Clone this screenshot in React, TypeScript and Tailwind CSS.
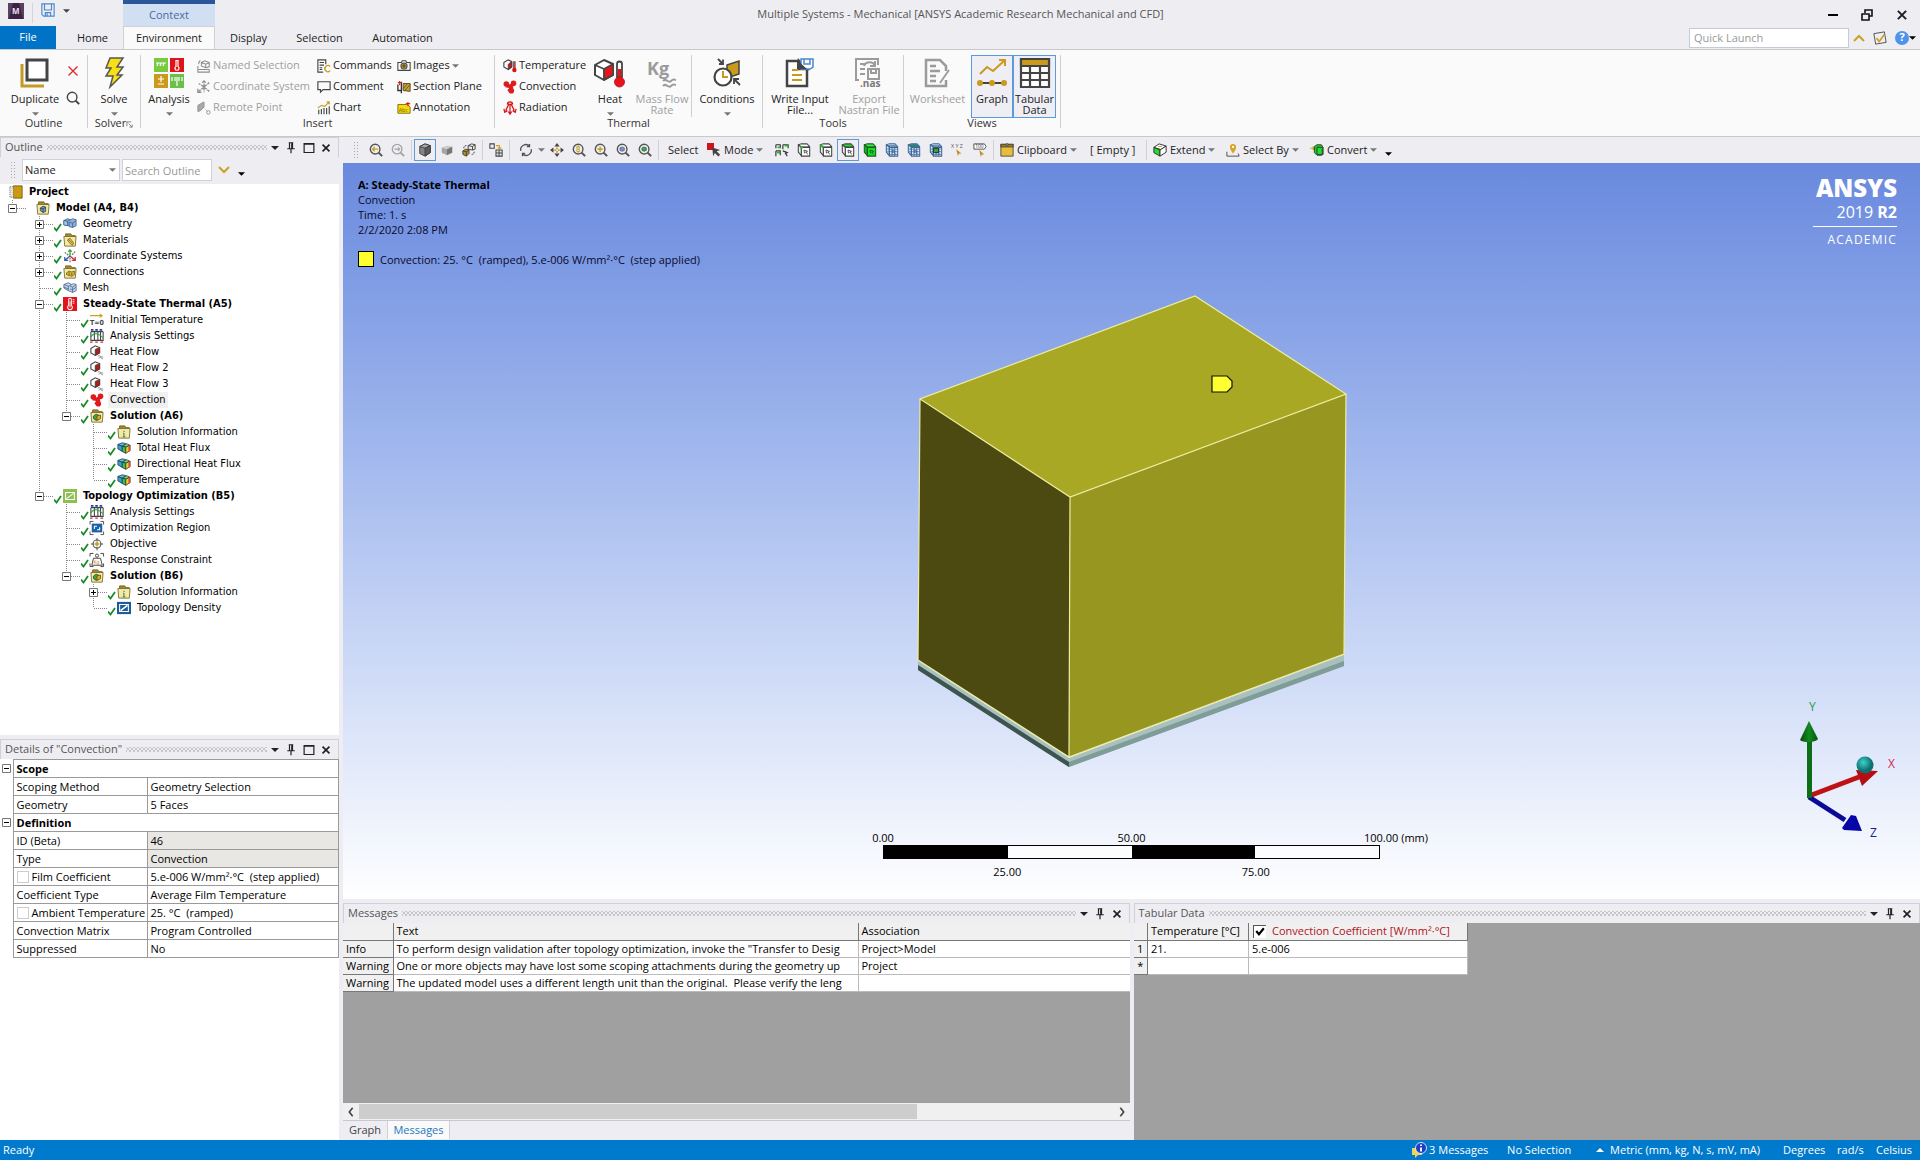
import React from 'react';

type IconProps = { name: string; size?: string };

const box = (c1: string, c2: string, c3: string, stroke = '#444') => (
  <g stroke={stroke} strokeWidth="1" strokeLinejoin="round">
    <path d="M2 4l6-3 6 2v8l-6 4-6-3z" fill={c2} />
    <path d="M2 4l6-3 6 2-6 3z" fill={c1} />
    <path d="M8 6l6-3v8l-6 4z" fill={c3} />
  </g>
);

const folder = (
  <g>
    <path d="M3 1h6l1 2h4v4H3z" fill="#a8892a" stroke="#6d5a1c" />
    <path d="M1 4h14l-1 11H2z" fill="#f3e9a6" stroke="#7a6a2a" />
  </g>
);

const lens = (
  <g fill="none" stroke="#555">
    <circle cx="7" cy="7" r="5.500" strokeWidth="1.600" />
    <path d="M11 11l4 4" strokeWidth="2.400" />
  </g>
);

const wireCube = (top: string, front: string, side: string, stroke = '#444') => (
  <g stroke={stroke} strokeWidth="1.200" strokeLinejoin="round">
    <path d="M1.500 2l3-1h7l3 3-2.500 .5h-7z" fill={top} />
    <path d="M1.500 2l3.500 3v9.500l-3.500-4z" fill={side} />
    <path d="M5 5h9.500v10H5z" fill={front} />
    <path d="M8 8l4 1.500-1.500 .5 1.500 3M8 8l.5 3.500 1.500-1" fill="none" strokeWidth="1" />
  </g>
);

const meshLines = (
  <path d="M2 7h12M2 10h12M5 3v11M8 3v12M11 3v12M3 13h11M3 3h10" stroke="#3d6a9c" strokeWidth=".9" />
);

const icons: Record<string, React.ReactNode> = {
  namedSel: (
    <g fill="none" stroke="#8c8c8c" strokeWidth="1.200">
      <path d="M5 4l4-2 5 2v5l-4 1-5-2zM5 4l5 2 4-2M10 6v4" />
      <path d="M1 8v7h13v-3M1 12h13M2 6c0-2 1-4 2-4" />
    </g>
  ),
  coordSys: (
    <g stroke="#8c8c8c" strokeWidth="1.500">
      <path d="M8 8V1M8 8l6-5M8 8l6 5M8 8l-6 5M8 8L2 4M8 8v6" strokeDasharray="4 1" />
      <path d="M6 3l2-2 2 2M1 10v4h4" fill="none" />
    </g>
  ),
  remotePoint: (
    <g>
      <path d="M1 5l7-4v6l-4 4-3 1z" fill="#a9a9a9" stroke="#8c8c8c" />
      <path d="M9 9l3 3" stroke="#8c8c8c" strokeDasharray="1 1" />
      <circle cx="13" cy="13" r="2" fill="none" stroke="#8c8c8c" />
    </g>
  ),
  commands: (
    <g fill="none" stroke="#444" strokeWidth="1.300">
      <path d="M7 15H1V1h9v5M3 4h5M3 7h5M3 10h3M3 12h3" />
      <path d="M15 8.500a3.500 3.500 0 1 0 0 5" stroke="#c9a227" strokeWidth="1.600" />
    </g>
  ),
  comment: <path d="M1 2h14v9H7l-3 3v-3H1z" fill="none" stroke="#444" strokeWidth="1.300" />,
  chart: (
    <g fill="none">
      <path d="M2 15v-5M5 15V9M8 15V8M11 15V8M14 15V6" stroke="#444" strokeWidth="1.300" />
      <path d="M1 8l4-3 4 1 5-5M11 1h3v3" stroke="#c9a227" strokeWidth="1.300" />
    </g>
  ),
  images: (
    <g fill="none" stroke="#444" strokeWidth="1.200">
      <path d="M1 4h4l1-2h4l1 2h4v9H1z" />
      <circle cx="8" cy="8" r="3.500" fill="#c9a227" />
      <circle cx="8" cy="8" r="1.300" />
    </g>
  ),
  section: (
    <g>
      <path d="M7 4h8v9l-8-1z" fill="#c9a227" stroke="#444" />
      <path d="M9 12l6-7M7 10l5-6" stroke="#6d5410" />
      <path d="M5 15V2M1 5v7h4" fill="none" stroke="#333" strokeWidth="1.500" />
      <path d="M1 3h5M3 1v5" stroke="#d22" strokeWidth="1.300" />
    </g>
  ),
  annotation: (
    <g>
      <path d="M1 4h11l3 3v7H1z" fill="#f5d90a" stroke="#7a6a10" />
      <text x="2" y="12" fontSize="6" fill="#6b5c00">Abc</text>
      <path d="M10 3h5M12.500 1v5" stroke="#d22" strokeWidth="1.300" />
    </g>
  ),
  temperature: (
    <g>
      <path d="M1 4l5-3 4 2v6l-4 3-5-3z" fill="#fff" stroke="#444" strokeWidth="1.300" />
      <path d="M6 6l4-3v6l-4 3z" fill="#c91818" stroke="#444" />
      <path d="M12 3h2v8h-2z" fill="#e33" stroke="#555" strokeWidth=".8" />
      <circle cx="13" cy="12.500" r="2.500" fill="#d81313" />
    </g>
  ),
  fan: (
    <g fill="#e01b1b">
      <circle cx="3.800" cy="4.500" r="3.200" />
      <circle cx="12" cy="3.800" r="3.200" />
      <circle cx="9.500" cy="12.200" r="3.200" />
      <path d="M2 8l5-3 4-2 1 5-1 4-5 1z" />
      <path d="M1 8l6 1-3 4z" fill="#fff" />
      <path d="M8 0l0 5 1-3zM15 8l-4-1 2 3z" fill="#fff" />
    </g>
  ),
  radiation: (
    <g fill="none" stroke="#d81313" strokeWidth="1.400">
      <path d="M8 3v11M7 3l-4 8M9 3l4 8M6 12l2 3 2-3M1 9l1 4 3-2M15 9l-1 4-3-2M5 4a3 3 0 0 1 6 0" />
    </g>
  ),
  project: (
    <g>
      <path d="M5 1h10v14H5z" fill="#c99a0e" stroke="#7a5c08" />
      <path d="M1 2h4v12H1z" fill="#ece6cf" stroke="#777" strokeDasharray="1.500 1" />
    </g>
  ),
  model: (
    <g>
      {folder}
      <path d="M5 8l3-2 3 1v5l-3 1-3-2z" fill="#7d9ab8" stroke="#2f4760" />
      <path d="M5 8l3 1 3-2M8 9v4" fill="none" stroke="#2f4760" />
    </g>
  ),
  geometry: (
    <g stroke="#3b5f8c" strokeWidth=".9" strokeLinejoin="round">
      <path d="M1 4l4-2 4 1 2-1 4 1v7l-4 2-4-1v-1l-6-1z" fill="#8fb0dc" />
      <path d="M1 4l4 1 4-2M5 5v5M7 6l4 1 4-3M11 7v5M7 6v4" fill="none" />
      <path d="M1 4l4 1v5l-4-1z" fill="#b5cdec" />
    </g>
  ),
  materials: (
    <g>
      {folder}
      <path d="M5 8l3-2 4 5-1 3-2-1z" fill="#e4c75c" stroke="#8a6c1a" />
      <path d="M6 7l5 5" stroke="#8a6c1a" />
    </g>
  ),
  csys: (
    <g fill="none" strokeWidth="1.500">
      <path d="M8 8V1M6 3l2-2 2 2" stroke="#2aa336" />
      <path d="M8 8l6 5M14 9v4h-4" stroke="#d33" />
      <path d="M8 8l-6 5M2 9v4h4" stroke="#3a62b0" />
      <path d="M2 4l4 3M14 3l-4 4M8 10v5" stroke="#777" strokeDasharray="2 1" />
    </g>
  ),
  connections: (
    <g>
      {folder}
      <path d="M4 9l3-2 3 1 3-1v4l-3 2-3-1-3-1z" fill="#d8b83e" stroke="#7d651a" />
      <path d="M7 8v4M10 9v3" stroke="#7d651a" />
    </g>
  ),
  mesh: (
    <g stroke="#44658c" strokeWidth=".9" strokeLinejoin="round">
      <path d="M1 4l5-2 4 2 2-1 3 1v7l-4 2-5-2-5-3z" fill="#c3d6ec" />
      <path d="M1 4l5 2 4-2M6 6v5M8 6l3 1 4-3M11 7v6M1 7l5 2M8 9l3 1 4-3" fill="none" />
    </g>
  ),
  thermal: (
    <g>
      <path d="M0 0h16v16H0z" fill="#e3131b" />
      <path d="M6.500 3a1.500 1.500 0 0 1 3 0v6.500a2.700 2.700 0 1 1-3 0z" fill="none" stroke="#fff" strokeWidth="1.200" />
      <path d="M8 5v7M11 3h2M11 5h2M11 7h2" stroke="#fff" />
    </g>
  ),
  initTemp: (
    <g>
      <path d="M0 3h13M11 1l3 2-3 2" fill="none" stroke="#c9a227" strokeWidth="1.300" />
      <text x="0" y="14" fontSize="8" fontWeight="600" fill="#444">T=0</text>
    </g>
  ),
  settings: (
    <g fill="none" strokeWidth="1.200">
      <path d="M1 3v10h14V3M5 2v11M9 2v11M12 2v11M1 3h14" stroke="#444" />
      <path d="M1 9c3-5 8-5 14 1" stroke="#22a23a" />
      <path d="M1 1h3M6 1h3M11 1h3" stroke="#2b3fa8" strokeWidth="2" />
      <path d="M0 15h3M6 15h3M12 15h3" stroke="#c33" strokeWidth="1.600" />
    </g>
  ),
  heatFlow: (
    <g>
      <path d="M1 4l5-3 5 2v6l-5 3-5-3z" fill="#fff" stroke="#444" strokeWidth="1.200" />
      <path d="M6 5l5-2v6l-5 3z" fill="#b5171c" stroke="#444" />
      <path d="M9 13c1-1 2-1 3 0s2 1 3 0M10 15c1-1 2-1 3 0s1 1 2 0" fill="none" stroke="#777" />
    </g>
  ),
  solution: (
    <g>
      {folder}
      <path d="M4 8l3-2 3 1v5l-3 1-3-2z" fill="#3aa34a" stroke="#2c5c33" />
      <path d="M8 8l4-1v4l-4 2z" fill="#e0b21c" stroke="#6b5a12" />
    </g>
  ),
  info: (
    <g>
      {folder}
      <path d="M8 6.500v1.500M8 9.500v4M6.500 13.500h3M6.800 9.500H8" stroke="#5f8a5a" strokeWidth="1.400" />
    </g>
  ),
  flux: (
    <g stroke="#1c3c4c" strokeWidth=".9" strokeLinejoin="round">
      <path d="M1 4l5-2 4 1-4 3z" fill="#4dc6e0" />
      <path d="M1 4l5 2v6l-5-3z" fill="#3f9fd8" />
      <path d="M6 6l5-3 4 2-5 2z" fill="#77d36a" />
      <path d="M6 6l4 1v7l-4-2z" fill="#3fbe49" />
      <path d="M10 7l5-2v6l-5 3z" fill="#f2d21b" />
      <path d="M13 6l2-1v6l-2 1.500z" fill="#e0502a" stroke="none" />
    </g>
  ),
  topo: (
    <g>
      <path d="M0 0h16v16H0z" fill="#8cc152" />
      <path d="M3 4h10v8H3z" fill="none" stroke="#fff" strokeWidth="1.200" />
      <path d="M4 11l8-6" stroke="#fff" strokeWidth="1.200" />
    </g>
  ),
  region: (
    <g>
      <path d="M2 3h12v10H2z" fill="#1c62a8" />
      <path d="M5 9V6h3M8 10h3V7" fill="none" stroke="#fff" strokeWidth="1.200" />
      <path d="M0 4V.5h4M12 .5h3.500V4M0 12v3.500h4M12 15.500h3.500V12" fill="none" stroke="#444" />
    </g>
  ),
  objective: (
    <g fill="none" stroke="#555" strokeWidth="1.200">
      <circle cx="8" cy="8" r="4.500" />
      <circle cx="8" cy="8" r="1.600" fill="#c9a227" stroke="#c9a227" />
      <path d="M8 1v4M8 11v4M1 8h4M11 8h4" />
    </g>
  ),
  constraint: (
    <g fill="none" stroke="#444" strokeWidth="1.100">
      <path d="M0 4V.5h4M12 .5h3.500V4M0 12v3.500h4M12 15.500h3.500V12" />
      <circle cx="8" cy="3" r="1.800" />
      <path d="M4 6h8l2 8H2z" />
      <text x="4" y="12.500" fontSize="6" fill="#c98a27" stroke="none">Kg</text>
    </g>
  ),
  density: (
    <g>
      <path d="M0 1h16v14H0z" fill="#1c5c99" />
      <path d="M3 4h10v8H3z" fill="none" stroke="#fff" strokeWidth="1.200" />
      <path d="M4 11l8-6" stroke="#fff" strokeWidth="2" />
    </g>
  ),
  zoomBack: <g>{lens}<path d="M10.500 7H4M6.500 4.500L4 7l2.500 2.500" fill="none" stroke="#c9a227" strokeWidth="1.600" /></g>,
  zoomForward: (
    <g fill="none" stroke="#a5a5a5">
      <circle cx="7" cy="7" r="5.500" strokeWidth="1.500" />
      <path d="M11 11l4 4" strokeWidth="2.200" />
      <path d="M4 7h6M8 5l2 2-2 2" strokeWidth="1.200" />
    </g>
  ),
  zoomInOut: <g>{lens}<path d="M5 5.500l2-2 2 2M5 8.500l2 2 2-2M5 7h4" fill="none" stroke="#c9a227" strokeWidth="1.400" /></g>,
  zoomPlus: <g>{lens}<path d="M4 7h6M7 4v6" stroke="#c9a227" strokeWidth="1.800" /></g>,
  zoomBox: <g>{lens}<path d="M4.500 5.500l2.500-1 2.500 1v3L7 9.500l-2.500-1z" fill="#7d93b8" stroke="#4a5f85" strokeWidth=".8" /></g>,
  zoomFit: <g>{lens}<path d="M4.500 5.500l2.500-1 2.500 1v3L7 9.500l-2.500-1z" fill="#3da35a" stroke="#2a6b3c" strokeWidth=".8" /></g>,
  cubeSolid: box('#a8a8a8', '#858585', '#5c5c5c', '#3c3c3c'),
  cubeFlat: (
    <g>
      <path d="M2 5l6-2 6 1-6 3z" fill="#c9c9c9" />
      <path d="M2 5l6 2v7l-6-3z" fill="#a5a5a5" />
      <path d="M8 7l6-3v7l-6 3z" fill="#777" />
    </g>
  ),
  cubeSwap: (
    <g fill="none" stroke="#444" strokeWidth="1.100">
      <path d="M7 3l4-2 4 1v5l-3 1-5-1zM7 3l5 1 3-2M12 4v4" />
      <path d="M1 9l3-2 4 1v4l-3 3-4-2z" fill="#b8901a" />
      <path d="M1 9l4 1 3-2M5 10v5" />
      <path d="M2 6c0-2 1-3 3-3M11 13c2 0 3-1 3-3" strokeDasharray="2 1" />
    </g>
  ),
  explode: (
    <g fill="none" stroke="#444" strokeWidth="1.200">
      <path d="M1 1h5v5H1zM8 8h7v7H8zM11.500 8v7M8 11.500h7" />
      <path d="M8 3h4v4M10 5l2 2 2-2" stroke="#c9a227" />
    </g>
  ),
  rotate: (
    <g fill="none" stroke="#555" strokeWidth="1.500">
      <path d="M2 9a6 6 0 0 1 10-5.500M14 7a6 6 0 0 1-10 5.500M12 1v3H9M4 15v-3h3" />
    </g>
  ),
  pan: (
    <g fill="#444">
      <path d="M8 0l3 4H5zM8 16l3-4H5zM0 8l4-3v6zM16 8l-4-3v6z" />
      <path d="M8 5v2M8 9v2M5 8h2M9 8h2" stroke="#c9a227" strokeWidth="2" />
    </g>
  ),
  modeCursor: (
    <g>
      <path d="M0 0h8v8H0z" fill="#d0121b" />
      <path d="M6 5l9 3-4 1.500 4 4-2 2-4-4L7 15z" fill="#444" />
    </g>
  ),
  filters: (
    <g>
      <path d="M1 2h5v4M9 2h6v4M1 9h5v5M1 2v4M9 2v5M1 9v6" fill="none" stroke="#333" strokeWidth="1.300" />
      <path d="M3 4h3v2H3zM11 2h4v2h-4zM2 10h4v2H2z" fill="#1fbf2f" />
      <path d="M9 9l5 2-2 1 2 3" fill="none" stroke="#333" strokeWidth="1.300" />
    </g>
  ),
  vertex: <g>{wireCube('#fff', '#fff', '#eee')}<circle cx="5" cy="5" r="1.600" fill="#1fbf2f" /></g>,
  edge: <g>{wireCube('#fff', '#fff', '#eee')}<path d="M1.500 2l3.500 3" stroke="#1fbf2f" strokeWidth="2.400" /></g>,
  face: wireCube('#1ce02c', '#fff', '#eee'),
  body: wireCube('#35f045', '#12e022', '#0cb81a', '#1d5a22'),
  nodes: <g>{wireCube('#fff', '#e7f0fa', '#dce8f4', '#3d6a9c')}{meshLines}</g>,
  elemFace: <g>{wireCube('#2ba83a', '#e7f0fa', '#dce8f4', '#3d6a9c')}{meshLines}</g>,
  elem: <g>{wireCube('#fff', '#e7f0fa', '#dce8f4', '#3d6a9c')}{meshLines}<path d="M5 6h6v5H5z" fill="#2ba83a" stroke="#222" /></g>,
  xyz: (
    <g>
      <text x="0" y="6" fontSize="6" fill="#555">X Y Z</text>
      <path d="M8 15l-2-8 6 5-3 0z" fill="#c98a1a" />
    </g>
  ),
  tag: (
    <g>
      <path d="M1 1h12l2 3-2 3H1z" fill="#fff" stroke="#444" />
      <text x="2.500" y="6" fontSize="5.500" fill="#333">100</text>
      <path d="M9 16L7 8l6 5-3 0z" fill="#c98a1a" />
    </g>
  ),
  clipboard: (
    <g>
      <path d="M1 1.500h14v13.500H1z" fill="#e8bc3c" stroke="#444" />
      <path d="M1 1.500h14v3H1z" fill="#a87c14" stroke="#444" />
      <path d="M7 1h2v2H7z" fill="#fff" stroke="#444" />
    </g>
  ),
  extend: (
    <g stroke="#333" strokeWidth="1.100" strokeLinejoin="round">
      <path d="M1 5l6-4 8 2.500-6 4z" fill="#fff" />
      <path d="M1 5l7 3v7l-7-4z" fill="#1ce02c" />
      <path d="M8 8l7-4.500v7L8 15z" fill="#fff" />
      <path d="M6 4h4" stroke="#c9a227" />
    </g>
  ),
  selectBy: (
    <g>
      <path d="M8 12C5 8 4.500 6 4.500 4.500a3.500 3.500 0 0 1 7 0C11.500 6 11 8 8 12z" fill="#d9a520" />
      <circle cx="8" cy="4.500" r="1.300" fill="#fff" />
      <path d="M1 10v5M1 15h14M15 15l-1-3" fill="none" stroke="#444" />
    </g>
  ),
  convert: (
    <g>
      <path d="M0 6h5M3 4l2 2-2 2" fill="none" stroke="#c9a227" strokeWidth="1.300" />
      <path d="M5 4l3-2h5l2 3v8l-2 1H8l-3-3z" fill="#18c928" stroke="#333" />
      <path d="M8 5h6v8H8z" fill="#1ce02c" stroke="#333" />
    </g>
  ),
  pin: <path d="M5 1h6M6 1v8M10 1v8M9 1v8M3 9h10M8 9v6" fill="none" stroke="#222" strokeWidth="1.600" />,
  square: <path d="M1.500 2h13v12h-13zM1 3h14" fill="none" stroke="#222" strokeWidth="1.600" />,
  close: <path d="M2.500 2.500l11 11M13.500 2.500l-11 11" stroke="#1e1e1e" strokeWidth="2.600" />,
  redX: <path d="M2 2l12 12M14 2L2 14" stroke="#dd2c2c" strokeWidth="1.800" />,
  search: (
    <g fill="none" stroke="#444">
      <circle cx="7" cy="7" r="5.500" strokeWidth="1.600" />
      <path d="M11 11l4 4" strokeWidth="2.400" />
    </g>
  ),
  launcher: <path d="M2 12V2h10M6 6l8 8M14 8v6H8" fill="none" stroke="#777" strokeWidth="2" />,
  save: (
    <g fill="none" stroke="#4a86cf" strokeWidth="1.300">
      <path d="M1 1h14v14H3l-2-2zM4 1v7h8V1M5 15v-4h6v4M7 12v3" />
    </g>
  ),
  app: (
    <g>
      <path d="M0 0h16v16H0z" fill="#5b3f63" />
      <path d="M5 0h6l4 16H1z" fill="#3a2340" />
      <text x="4" y="11" fontSize="8" fontWeight="700" fill="#e9dfee">M</text>
    </g>
  ),
};

const large: Record<string, React.ReactNode> = {
  duplicate: (
    <g fill="none">
      <path d="M3 7v22h22" stroke="#c29a28" strokeWidth="3" />
      <path d="M8 3h20v20H8z" fill="#fff" stroke="#444" strokeWidth="3" />
    </g>
  ),
  solve: <path d="M12 1h13l-6 9h6l-6 8h5L12 30l3-11H8l5-8H8z" fill="#f7e017" stroke="#555" strokeWidth="1.500" />,
  analysis: (
    <g>
      <path d="M1 1h14v14H1z" fill="#7ac943" />
      <path d="M17 1h14v14H17z" fill="#e0131b" />
      <path d="M1 17h14v14H1z" fill="#c99a1c" />
      <path d="M17 17h14v14H17z" fill="#6cc04a" />
      <path d="M3 6h10M4 9l1-3M7 9l1-3M10 9l1-3M5 22h6M8 19v6M5 27h6M19 20v4M22 20v4M24 20v9M26 20v4M29 20v4" stroke="#fff" strokeWidth="1.200" />
      <path d="M23 3.500h2v6a2 2 0 1 1-2 0z" fill="none" stroke="#fff" strokeWidth="1.200" />
    </g>
  ),
  heat: (
    <g strokeLinejoin="round">
      <path d="M1 8l9-5 9 4v11l-9 5-9-5z" fill="#fff" stroke="#444" strokeWidth="2" />
      <path d="M10 12l9-5v11l-9 5z" fill="#e8141c" stroke="#444" strokeWidth="1.500" />
      <path d="M1 8l9 4v11" fill="none" stroke="#444" strokeWidth="1.500" />
      <path d="M23 7a2.500 2.500 0 0 1 5 0v13h-5z" fill="#fff" stroke="#444" strokeWidth="1.800" />
      <path d="M25.500 12v10" stroke="#e8141c" strokeWidth="3" />
      <circle cx="25.500" cy="25" r="5" fill="#e8141c" stroke="#a11" strokeWidth=".8" />
    </g>
  ),
  massFlow: (
    <g>
      <text x="1" y="18" fontSize="18" fontWeight="700" fill="#9b9b9b">Kg</text>
      <path d="M17 24c3-4 5 3 8 0s3-1 5-1M17 29c3-4 5 3 8 0s3-1 5-1" fill="none" stroke="#9b9b9b" strokeWidth="2" />
    </g>
  ),
  conditions: (
    <g fill="none">
      <path d="M16 8l12-4v13l-12 4z" fill="#c99a1c" stroke="#444" strokeWidth="1.500" />
      <circle cx="12" cy="20" r="8.500" fill="#fff" stroke="#444" strokeWidth="2.200" />
      <path d="M12 14v6h5" stroke="#c99a1c" strokeWidth="2" />
      <path d="M7 2l5 5M12 2.500V7H8M29 28l-6-6M23 27v-5h5" stroke="#444" strokeWidth="1.800" />
    </g>
  ),
  writeInput: (
    <g fill="none">
      <path d="M15 4H3v25h20V12M15 4l8 8h-8z" fill="#fff" stroke="#444" strokeWidth="2.500" />
      <path d="M8 13h6M8 18h10M8 23h10" stroke="#c99a1c" strokeWidth="2.200" />
      <path d="M17 2h12v8l-3 2h-9zM20 2v5h6V2" fill="#fff" stroke="#4a86cf" strokeWidth="1.500" />
      <path d="M13 3l10 9H13z" fill="#444" />
    </g>
  ),
  exportNas: (
    <g fill="none" stroke="#9b9b9b" strokeWidth="2">
      <path d="M6 23H3V2h22v6M7 7h6M7 12h5M7 17h5M11 9c2-5 9-5 11 0M22 4v5h-5M15 12h11v10H15zM18 12v4h5v-4" />
      <text x="7" y="30" fontSize="10" fontWeight="700" fill="#777" stroke="none">.nas</text>
    </g>
  ),
  worksheet: (
    <g fill="none" stroke="#9b9b9b" strokeWidth="2.500">
      <path d="M24 23v6H4V3h14l6 6v5M8 9h6M8 14h10M8 19h6M8 24h6" />
      <path d="M27 13l-9 13" strokeWidth="1.800" />
    </g>
  ),
  graph: (
    <g fill="none">
      <path d="M4 17l7-7 6 4L29 3M23 3h6v6" stroke="#c99a1c" strokeWidth="2" />
      <path d="M3 26h26" stroke="#444" strokeWidth="2" />
      <g fill="#c99a1c"><circle cx="4" cy="26" r="3" /><circle cx="16" cy="26" r="3" /><circle cx="28" cy="26" r="3" /></g>
    </g>
  ),
  tabular: (
    <g fill="none" stroke="#444" strokeWidth="2.200">
      <path d="M2 2h28v28H2z" fill="#fff" />
      <path d="M2 2h28v7H2z" fill="#c99a1c" />
      <path d="M2 16h28M2 23h28M11 9v21M21 9v21" />
    </g>
  ),
};

const Icon = ({ name, size = 'size-[14px]' }: IconProps) => (
  <svg viewBox="0 0 16 16" className={`${size} shrink-0 overflow-visible`} aria-hidden="true">{icons[name]}</svg>
);

const Caret = ({ color = 'text-[#777]' }: { color?: string }) => (
  <svg viewBox="0 0 8 4" className={`h-1 w-[7px] shrink-0 ${color}`} aria-hidden="true">
    <path d="M0 0h8L4 4z" fill="currentColor" />
  </svg>
);

type BigProps = { icon: string; lines: string[]; width: string; muted?: boolean; active?: boolean; caret?: boolean };

const BigButton = ({ icon, lines, width, muted, active, caret }: BigProps) => (
  <button
    className={`flex h-[63px] flex-col items-center border ${width} ${muted ? 'text-[#a0a0a0]' : 'text-[#222]'} ${active ? 'border-[#5b9bdc] bg-[#eeeef4]' : 'border-transparent'}`}
  >
    <svg viewBox="0 0 32 32" className="mt-px size-8 overflow-visible" aria-hidden="true">{large[icon]}</svg>
    <span className="mt-1 flex flex-col whitespace-nowrap leading-[11px]">
      {lines.map((l) => <span key={l}>{l}</span>)}
    </span>
    {caret && <span className="mt-2"><Caret /></span>}
  </button>
);

type SmallProps = { icon: string; label: string; muted?: boolean; caret?: boolean };

const SmallButton = ({ icon, label, muted, caret }: SmallProps) => (
  <button className={`flex h-[21px] items-center gap-0.5 whitespace-nowrap ${muted ? 'text-[#a0a0a0]' : 'text-[#222]'}`}>
    <Icon name={icon} />
    {label}
    {caret && <Caret />}
  </button>
);

type GroupProps = { label: string; width: string; launcher?: boolean; children: React.ReactNode };

const Group = ({ label, width, launcher, children }: GroupProps) => (
  <section className={`flex h-[73px] shrink-0 flex-col border-r border-[#cfcfd4] ${width}`}>
    <div className="flex h-[62px]">{children}</div>
    <div className="flex items-end justify-center leading-[11px] text-[#333]">
      {label}
      {launcher && <button aria-label="More" className="flex"><Icon name="launcher" size="size-[7px]" /></button>}
    </div>
  </section>
);

const Header = () => (
  <header className="shrink-0 bg-[#eeeef2]">
    <div className="flex h-[26px]">
      <div className="flex w-[123px] items-start gap-2 pl-2 pt-[3px]">
        <Icon name="app" size="size-4" />
        <span className="h-5 w-px bg-[#d4d4da]" />
        <Icon name="save" />
        <span className="pt-1.5"><Caret color="text-[#444]" /></span>
      </div>
      <div className="flex w-[92px] items-center justify-center border-t-4 border-[#2b579a] bg-[#d0dff2] text-[#4a6ba5]">Context</div>
      <h1 className="flex-1 pr-[122px] pt-1.5 text-center leading-4 text-[#555]">
        Multiple Systems - Mechanical [ANSYS Academic Research Mechanical and CFD]
      </h1>
      <div className="flex items-center gap-[23px] pr-3 pt-1">
        <button aria-label="Minimize" className="flex h-3 w-2.5 items-center"><span className="h-0.5 w-full bg-black" /></button>
        <button aria-label="Restore" className="flex">
          <svg viewBox="0 0 12 12" className="size-3"><path d="M1 5h7v6H1zM4 4V1h7v6H8" fill="none" stroke="#111" strokeWidth="1.600" /></svg>
        </button>
        <button aria-label="Close" className="flex"><Icon name="close" size="size-3" /></button>
      </div>
    </div>
    <div className="flex h-[23px] items-center">
      <nav className="flex h-full flex-1 items-center text-[#222]">
        <button className="h-full w-14 bg-[#0173c7] text-white">File</button>
        <button className="h-full w-[67px] pl-1.5 pt-0.5">Home</button>
        <button className="h-full w-[92px] border-x border-t border-[#d0d0d6] bg-[#fafafa]">Environment</button>
        <button className="h-full w-[67px] pt-0.5">Display</button>
        <button className="h-full w-[75px] pt-0.5">Selection</button>
        <button className="h-full w-[91px] pt-0.5">Automation</button>
      </nav>
      <input aria-label="Quick Launch" placeholder="Quick Launch" className="h-5 w-40 border border-[#c5cad6] bg-white px-1 placeholder:text-[#999]" />
      <div className="flex items-center gap-2 pl-1 pr-1">
        <svg viewBox="0 0 12 8" className="h-2 w-3"><path d="M1 7l5-5 5 5" fill="none" stroke="#c9a227" strokeWidth="2" /></svg>
        <svg viewBox="0 0 16 16" className="size-3.5"><path d="M1 3l12-2 2 12-12 2z" fill="none" stroke="#444" /><path d="M4 8l3 4 6-8" fill="none" stroke="#c9a227" strokeWidth="2" /></svg>
        <span className="flex items-center">
          <span className="flex size-3.5 items-center justify-center rounded-full bg-[#4f94e8] font-bold text-white">?</span>
          <Caret color="text-black" />
        </span>
      </div>
    </div>
  </header>
);

const Ribbon = () => (
  <div className="flex h-[88px] shrink-0 overflow-hidden border-y border-[#c8c8cc] bg-[#fafafa] pt-[5px]">
    <Group label="Outline" width="w-[88px]">
      <BigButton icon="duplicate" lines={['Duplicate']} width="w-[62px] ml-1" caret />
      <div className="flex flex-col items-center gap-[14px] pt-2.5">
        <button aria-label="Delete" className="flex"><Icon name="redX" size="size-3" /></button>
        <button aria-label="Find" className="flex"><Icon name="search" /></button>
      </div>
    </Group>
    <Group label="Solver" width="w-[53px]" launcher>
      <BigButton icon="solve" lines={['Solve']} width="w-[53px]" caret />
    </Group>
    <Group label="Insert" width="w-[354px]">
      <BigButton icon="analysis" lines={['Analysis']} width="w-14" caret />
      <div className="w-[120px]">
        <SmallButton icon="namedSel" label="Named Selection" muted />
        <SmallButton icon="coordSys" label="Coordinate System" muted />
        <SmallButton icon="remotePoint" label="Remote Point" muted />
      </div>
      <div className="w-20">
        <SmallButton icon="commands" label="Commands" />
        <SmallButton icon="comment" label="Comment" />
        <SmallButton icon="chart" label="Chart" />
      </div>
      <div>
        <SmallButton icon="images" label="Images" caret />
        <SmallButton icon="section" label="Section Plane" />
        <SmallButton icon="annotation" label="Annotation" />
      </div>
    </Group>
    <Group label="Thermal" width="w-[268px]">
      <div className="ml-2 w-[84px]">
        <SmallButton icon="temperature" label="Temperature" />
        <SmallButton icon="fan" label="Convection" />
        <SmallButton icon="radiation" label="Radiation" />
      </div>
      <BigButton icon="heat" lines={['Heat']} width="w-[46px]" caret />
      <BigButton icon="massFlow" lines={['Mass Flow', 'Rate']} width="w-[58px]" muted />
      <div className="border-l border-[#cfcfd4]">
        <BigButton icon="conditions" lines={['Conditions']} width="w-[70px]" caret />
      </div>
    </Group>
    <Group label="Tools" width="w-[141px]">
      <BigButton icon="writeInput" lines={['Write Input', 'File...']} width="w-[74px]" />
      <BigButton icon="exportNas" lines={['Export', 'Nastran File']} width="w-16" muted />
    </Group>
    <Group label="Views" width="w-[157px]">
      <BigButton icon="worksheet" lines={['Worksheet']} width="w-[67px]" muted />
      <BigButton icon="graph" lines={['Graph']} width="w-[42px]" active />
      <BigButton icon="tabular" lines={['Tabular', 'Data']} width="w-[43px]" active />
    </Group>
  </div>
);

const PanelHeader = ({ title, floating }: { title: string; floating?: boolean }) => (
  <div className="flex h-5 shrink-0 items-center gap-2 border border-b-0 border-[#d0d0da] bg-[#eeeef2] pl-1 pr-[7px] text-[#555]">
    <h2 className="whitespace-nowrap">{title}</h2>
    <span className="-mx-1 h-[5px] flex-1 bg-[radial-gradient(#aaa_0.5px,transparent_1px),radial-gradient(#aaa_0.5px,transparent_1px)] bg-[length:4px_4px] bg-[position:0_0,2px_2px]" />
    <span className="flex items-center gap-[6px]">
      <svg viewBox="0 0 8 4" className="h-1 w-2"><path d="M0 0h8L4 4z" fill="#222" /></svg>
      <button aria-label="Pin" className="flex"><Icon name="pin" size="size-3" /></button>
      {floating && <button aria-label="Maximize" className="flex"><Icon name="square" size="size-3" /></button>}
      <button aria-label="Close" className="flex"><Icon name="close" size="size-2.5" /></button>
    </span>
  </div>
);

type Node = { label: string; icon: string; level: number; exp?: '+' | '-'; bold?: boolean; selected?: boolean; guides?: number[]; end?: boolean };

// guides: levels whose vertical line runs past this row
const tree: Node[] = [
  { label: 'Project', icon: 'project', level: 0, bold: true },
  { label: 'Model (A4, B4)', icon: 'model', level: 1, exp: '-', bold: true, end: true },
  { label: 'Geometry', icon: 'geometry', level: 2, exp: '+' },
  { label: 'Materials', icon: 'materials', level: 2, exp: '+' },
  { label: 'Coordinate Systems', icon: 'csys', level: 2, exp: '+' },
  { label: 'Connections', icon: 'connections', level: 2, exp: '+' },
  { label: 'Mesh', icon: 'mesh', level: 2 },
  { label: 'Steady-State Thermal (A5)', icon: 'thermal', level: 2, exp: '-', bold: true },
  { label: 'Initial Temperature', icon: 'initTemp', level: 3, guides: [2] },
  { label: 'Analysis Settings', icon: 'settings', level: 3, guides: [2] },
  { label: 'Heat Flow', icon: 'heatFlow', level: 3, guides: [2] },
  { label: 'Heat Flow 2', icon: 'heatFlow', level: 3, guides: [2] },
  { label: 'Heat Flow 3', icon: 'heatFlow', level: 3, guides: [2] },
  { label: 'Convection', icon: 'fan', level: 3, guides: [2], selected: true },
  { label: 'Solution (A6)', icon: 'solution', level: 3, exp: '-', bold: true, guides: [2], end: true },
  { label: 'Solution Information', icon: 'info', level: 4, guides: [2] },
  { label: 'Total Heat Flux', icon: 'flux', level: 4, guides: [2] },
  { label: 'Directional Heat Flux', icon: 'flux', level: 4, guides: [2] },
  { label: 'Temperature', icon: 'flux', level: 4, guides: [2], end: true },
  { label: 'Topology Optimization (B5)', icon: 'topo', level: 2, exp: '-', bold: true, end: true },
  { label: 'Analysis Settings', icon: 'settings', level: 3 },
  { label: 'Optimization Region', icon: 'region', level: 3 },
  { label: 'Objective', icon: 'objective', level: 3 },
  { label: 'Response Constraint', icon: 'constraint', level: 3 },
  { label: 'Solution (B6)', icon: 'solution', level: 3, exp: '-', bold: true, end: true },
  { label: 'Solution Information', icon: 'info', level: 4, exp: '+' },
  { label: 'Topology Density', icon: 'density', level: 4, end: true },
];

const Expander = ({ open }: { open: boolean }) => (
  <g>
    <path d="M8.500 4.500h8v8h-8z" fill="#fff" stroke="#777" />
    <path d={open ? 'M10 8.500h5' : 'M10 8.500h5M12.500 6v5'} stroke="#000" />
  </g>
);

const TreeRow = ({ node }: { node: Node }) => (
  <li className="flex h-4 items-center">
    {Array.from({ length: node.level }, (_, i) => i + 1).map((lv) => (
      <svg key={lv} viewBox="0 0 27 16" className="h-4 w-[27px] shrink-0" aria-hidden="true">
        {lv < node.level && node.guides?.includes(lv) && <path d="M12.500 0v16" stroke="#888" strokeDasharray="1 1" />}
        {lv === node.level && (
          <g>
            <path d={node.end ? 'M12.500 0v8' : 'M12.500 0v16'} stroke="#888" strokeDasharray="1 1" />
            <path d="M13 8.500h14" stroke="#888" strokeDasharray="1 1" />
            {node.exp && <Expander open={node.exp === '-'} />}
          </g>
        )}
      </svg>
    ))}
    <svg viewBox="0 0 9 16" className="h-4 w-[9px] shrink-0" aria-hidden="true">
      {node.level > 1 && <path d="M0 11.500l2.500 3L7 8" fill="none" stroke="#1c8a2a" strokeWidth="1.800" />}
    </svg>
    <Icon name={node.icon} />
    <span className={`ml-1 whitespace-nowrap px-0.5 leading-4 ${node.bold ? 'font-bold' : ''} ${node.selected ? 'bg-[#f0f0f0]' : ''}`}>{node.label}</span>
  </li>
);

const Grip = () => (
  <span className="h-[18px] w-1.5 bg-[radial-gradient(#aaa_0.5px,transparent_1px)] bg-[length:3px_3px]" />
);

const OutlinePanel = () => (
  <section className="flex min-h-0 flex-1 flex-col bg-white">
    <PanelHeader title="Outline" floating />
    <div className="flex h-[27px] shrink-0 items-center bg-[#eeeef2] pb-px pl-2.5">
      <Grip />
      <span className="relative ml-1.5 flex">
        <select aria-label="Filter by" className="h-[22px] w-[98px] appearance-none border border-[#d0d0da] bg-white pl-0.5 text-[#222]">
          <option>Name</option>
        </select>
        <span className="pointer-events-none absolute right-1 top-[9px] flex"><Caret /></span>
      </span>
      <input aria-label="Search Outline" placeholder="Search Outline" className="ml-0.5 h-[22px] w-[90px] border border-[#d0d0da] bg-white px-0.5 placeholder:text-[#999]" />
      <svg viewBox="0 0 12 8" className="ml-1.5 h-2 w-3"><path d="M1 1l5 5 5-5" fill="none" stroke="#c9a227" strokeWidth="2" /></svg>
      <span className="ml-2 mt-2"><Caret color="text-black" /></span>
    </div>
    <ul className="min-h-0 flex-1 overflow-hidden font-['DejaVu_Sans_Condensed','DejaVu_Sans',sans-serif] text-[11px] text-black">
      {tree.map((node, i) => <TreeRow key={i} node={node} />)}
    </ul>
  </section>
);

type Detail = { name: string; value?: string; ro?: boolean; check?: boolean };

const details: Detail[] = [
  { name: 'Scope' },
  { name: 'Scoping Method', value: 'Geometry Selection' },
  { name: 'Geometry', value: '5 Faces' },
  { name: 'Definition' },
  { name: 'ID (Beta)', value: '46', ro: true },
  { name: 'Type', value: 'Convection', ro: true },
  { name: 'Film Coefficient', value: '5.e-006 W/mm²·°C  (step applied)', check: true },
  { name: 'Coefficient Type', value: 'Average Film Temperature' },
  { name: 'Ambient Temperature', value: '25. °C  (ramped)', check: true },
  { name: 'Convection Matrix', value: 'Program Controlled' },
  { name: 'Suppressed', value: 'No' },
];

const DetailsPanel = () => (
  <section className="flex h-[401px] shrink-0 flex-col bg-white">
    <PanelHeader title={'Details of "Convection"'} floating />
    <table className="w-full table-fixed border-collapse text-black">
      <colgroup>
        <col className="w-[13px]" />
        <col className="w-[134px]" />
        <col />
      </colgroup>
      <tbody>
        {details.map((d) => (
          <tr key={d.name} className="h-[18px] leading-4">
            <td className="p-0 pl-0.5">
              {!d.value && (
                <svg viewBox="8 4 9 9" className="size-[9px]" aria-hidden="true"><Expander open /></svg>
              )}
            </td>
            {d.value ? (
              <>
                <td className="border border-[#9a9a9a] p-0 pl-[3px]">
                  {d.check ? (
                    <label className="flex items-center gap-[3px] whitespace-nowrap">
                      <input type="checkbox" className="size-3 appearance-none border border-[#ccc] bg-white" />
                      {d.name}
                    </label>
                  ) : d.name}
                </td>
                <td className={`whitespace-pre border border-[#9a9a9a] p-0 pl-[3px] ${d.ro ? 'bg-[#e8e7e3]' : ''}`}>{d.value}</td>
              </>
            ) : (
              <td colSpan={2} className="border border-[#9a9a9a] p-0 pl-[3px] font-bold">{d.name}</td>
            )}
          </tr>
        ))}
      </tbody>
    </table>
  </section>
);

const Tool = ({ name, active }: { name: string; active?: boolean }) => (
  <button aria-label={name} className={`flex size-[22px] items-center justify-center border ${active ? 'border-[#5b9bdc]' : 'border-transparent'}`}>
    <Icon name={name} />
  </button>
);

const ToolText = ({ name, label, width }: { name: string; label: string; width: string }) => (
  <button className={`flex items-center gap-[3px] whitespace-nowrap ${width}`}>
    <Icon name={name} />
    {label}
    <Caret />
  </button>
);

const Sep = () => <span className="mx-0.5 h-5 w-px bg-[#d0d0d8]" />;

const Toolbar = () => (
  <div className="flex h-[26px] shrink-0 items-center overflow-hidden bg-[#eeeef2] pl-2.5 text-[#222]">
    <Grip />
    <span className="ml-1.5 flex items-center">
      <Tool name="zoomBack" />
      <Tool name="zoomForward" />
      <Sep />
      <Tool name="cubeSolid" active />
      <Tool name="cubeFlat" />
      <Tool name="cubeSwap" />
      <Sep />
      <Tool name="explode" />
      <Sep />
      <span className="ml-[3px] flex"><Tool name="rotate" /></span>
      <span className="px-px"><Caret /></span>
      <Tool name="pan" />
      <Tool name="zoomInOut" />
      <Tool name="zoomPlus" />
      <Tool name="zoomBox" />
      <Tool name="zoomFit" />
      <Sep />
    </span>
    <span className="ml-[7px] w-[39px]">Select</span>
    <ToolText name="modeCursor" label="Mode" width="w-16" />
    <Tool name="filters" />
    <Tool name="vertex" />
    <Tool name="edge" />
    <Tool name="face" active />
    <Tool name="body" />
    <Tool name="nodes" />
    <Tool name="elemFace" />
    <Tool name="elem" />
    <Tool name="xyz" />
    <Tool name="tag" />
    <Sep />
    <ToolText name="clipboard" label="Clipboard" width="ml-1 w-[90px]" />
    <span className="w-[50px] whitespace-nowrap">[ Empty ]</span>
    <span className="ml-1 flex"><Sep /></span>
    <ToolText name="extend" label="Extend" width="ml-1 w-[73px]" />
    <ToolText name="selectBy" label="Select By" width="w-[84px]" />
    <ToolText name="convert" label="Convert" width="w-[75px]" />
    <span className="mt-2"><Caret color="text-black" /></span>
  </div>
);

const Cube = () => (
  <svg viewBox="910 286 444 492" className="mt-[123px] h-[492px] w-[444px]" aria-hidden="true">
    <path d="M918 661l151 97 275-103v11l-275 101-151-97z" fill="#a9c0bd" />
    <path d="M918 665l151 97 275-101v5l-275 101-151-97z" fill="#7f9c98" />
    <path d="M918 665l151 97v5l-151-97z" fill="#3e5450" />
    <path d="M1195 296l151 98-276 103-150-98z" fill="#a9a824" />
    <path d="M920 399l150 98-1 260-151-97z" fill="#4c4a10" />
    <path d="M1070 497l276-103-2 260-275 103z" fill="#979621" />
    <path d="M1195 296l151 98-276 103-150-98zM920 399l-2 261 151 97 275-103 2-260M1070 497l-1 260" fill="none" stroke="#efeea0" strokeWidth="1.200" />
    <path d="M1212 376h15l5 5v6l-5 5h-15z" fill="#ffff30" stroke="#111" strokeWidth="1.200" />
  </svg>
);

const Triad = () => (
  <svg viewBox="1790 695 120 150" className="absolute bottom-[55px] right-2.5 h-[150px] w-[120px]" aria-hidden="true">
    <defs>
      <linearGradient id="green"><stop offset="0" stopColor="#0a4a0e" /><stop offset=".5" stopColor="#128a1c" /><stop offset="1" stopColor="#0a5210" /></linearGradient>
      <radialGradient id="ball" cx=".4" cy=".35"><stop offset="0" stopColor="#3fd0cc" /><stop offset="1" stopColor="#0c6f70" /></radialGradient>
    </defs>
    <path d="M1809 797l50-19" stroke="#c01216" strokeWidth="5" />
    <path d="M1856 771l22 1-16 15z" fill="#b50e12" />
    <path d="M1809 798l36 23" stroke="#0a0a96" strokeWidth="5" />
    <path d="M1842 829l9-13 5 1 6 15-18-1z" fill="#0707a8" />
    <path d="M1807 740h5v59h-5z" fill="#0c6e15" />
    <path d="M1809 722l9 18c-3 4-15 4-18 1z" fill="url(#green)" />
    <circle cx="1865" cy="766" r="8.500" fill="url(#ball)" />
    <g fontSize="12">
      <text x="1809" y="712" fill="#2a9a4a">Y</text>
      <text x="1888" y="769" fill="#cc2a4a">X</text>
      <text x="1870" y="838" fill="#1a1a9a">Z</text>
    </g>
  </svg>
);

const ScaleBar = () => (
  <div className="w-[497px] text-[11px] leading-[14px] text-black">
    <div className="flex justify-between">
      <span className="flex w-0 justify-center">0.00</span>
      <span className="flex w-0 justify-center">50.00</span>
      <span className="w-0"><span className="-ml-4 whitespace-nowrap">100.00 (mm)</span></span>
    </div>
    <div className="flex h-[14px] border border-black bg-white/60">
      <span className="flex-1 bg-black" />
      <span className="flex-1" />
      <span className="flex-1 bg-black" />
      <span className="flex-1" />
    </div>
    <div className="mt-1.5 flex justify-around">
      <span className="flex w-0 justify-center">25.00</span>
      <span className="flex w-0 justify-center">75.00</span>
    </div>
  </div>
);

const Viewport = () => (
  <main className="relative flex min-h-0 flex-1 flex-col items-center overflow-hidden bg-linear-to-b from-[#6989de] to-white">
    <div className="absolute left-[15px] top-[14px] leading-[15px] text-[#0a0a2a]">
      <p className="font-bold text-black">A: Steady-State Thermal</p>
      <p>Convection</p>
      <p>Time: 1. s</p>
      <p>2/2/2020 2:08 PM</p>
      <p className="mt-[14px] flex items-center gap-1.5 whitespace-pre">
        <span className="size-4 border border-black bg-[#ffff30]" />
        Convection: 25. °C  (ramped), 5.e-006 W/mm²·°C  (step applied)
      </p>
    </div>
    <div className="absolute right-[23px] top-[11px] flex flex-col items-end text-white">
      <span className="text-2xl font-extrabold leading-7">ANSYS</span>
      <span className="text-base leading-5">2019 <b>R2</b></span>
      <span className="mt-1 w-[84px] border-t border-white pt-[7px] text-right text-[12px] leading-3 tracking-widest">ACADEMIC</span>
    </div>
    <Cube />
    <div className="mt-[53px]"><ScaleBar /></div>
    <Triad />
  </main>
);

const messages = [
  ['Info', 'To perform design validation after topology optimization, invoke the "Transfer to Desig', 'Project>Model'],
  ['Warning', 'One or more objects may have lost some scoping attachments during the geometry up', 'Project'],
  ['Warning', 'The updated model uses a different length unit than the original.  Please verify the leng', ''],
];

const MessagesPanel = () => (
  <section className="flex min-w-0 flex-1 flex-col">
    <PanelHeader title="Messages" />
    <div className="flex-1 bg-[#a0a0a0]">
      <table className="w-full table-fixed border-collapse text-black">
        <colgroup>
          <col className="w-[50px]" />
          <col className="w-[465px]" />
          <col />
        </colgroup>
        <thead>
          <tr className="h-[17px] bg-[#f0f0f0] text-left leading-4">
            <th className="border-b border-r border-[#777] p-0" />
            <th className="border-b border-r border-[#777] p-0 pl-[3px] font-normal">Text</th>
            <th className="border-b border-[#777] p-0 pl-[3px] font-normal">Association</th>
          </tr>
        </thead>
        <tbody>
          {messages.map(([kind, text, assoc]) => (
            <tr key={text} className="h-[17px] bg-white leading-4">
              <td className="overflow-hidden whitespace-nowrap border-b border-r border-[#777] bg-[#f0f0f0] p-0 pl-[3px]">{kind}</td>
              <td className="overflow-hidden whitespace-pre border-b border-r border-[#bbb] p-0 pl-[3px]">{text}</td>
              <td className="border-b border-[#bbb] p-0 pl-[3px]">{assoc}</td>
            </tr>
          ))}
        </tbody>
      </table>
    </div>
    <div className="flex h-[17px] shrink-0 items-center gap-1 bg-[#f0f0f0] px-1">
      <svg viewBox="0 0 8 12" className="h-2.5 w-2"><path d="M6 1L2 6l4 5" fill="none" stroke="#444" strokeWidth="2" /></svg>
      <span className="flex h-[15px] flex-1"><span className="h-full w-[74%] bg-[#cdcdcd]" /></span>
      <svg viewBox="0 0 8 12" className="h-2.5 w-2"><path d="M2 1l4 5-4 5" fill="none" stroke="#444" strokeWidth="2" /></svg>
    </div>
    <div className="flex h-5 shrink-0 items-start border-t border-[#c8c8d4] bg-[#eeeef2]">
      <button className="h-[18px] w-11 leading-4 text-[#444]">Graph</button>
      <button className="h-[18px] w-[63px] border-x border-[#d0d0da] bg-[#fafafa] leading-4 text-[#1d78c1]">Messages</button>
    </div>
  </section>
);

const TabularPanel = () => (
  <section className="flex min-w-0 flex-1 flex-col">
    <PanelHeader title="Tabular Data" />
    <div className="flex-1 bg-[#a0a0a0]">
      <table className="w-[334px] table-fixed border-collapse text-black">
        <colgroup>
          <col className="w-[14px]" />
          <col className="w-[101px]" />
          <col />
        </colgroup>
        <thead>
          <tr className="h-[17px] bg-[#f0f0f0] text-left leading-4">
            <th className="border-b border-r border-[#777] p-0" />
            <th className="whitespace-nowrap border-b border-r border-[#777] p-0 pl-[3px] font-normal">Temperature [°C]</th>
            <th className="border-b border-r border-[#777] p-0 pl-1 font-normal text-[#b01020]">
              <label className="flex items-center gap-1.5 whitespace-nowrap">
                <span className="grid size-[13px] shrink-0">
                  <input type="checkbox" defaultChecked className="col-start-1 row-start-1 size-[13px] appearance-none border-l border-t border-[#555] bg-white" />
                  <svg viewBox="0 0 12 12" className="pointer-events-none col-start-1 row-start-1 size-[13px]"><path d="M3 5.500l2.500 3L10 3" fill="none" stroke="#000" strokeWidth="2" /></svg>
                </span>
                Convection Coefficient [W/mm²·°C]
              </label>
            </th>
          </tr>
        </thead>
        <tbody>
          {[['1', '21.', '5.e-006'], ['*', '', '']].map(([n, t, c]) => (
            <tr key={n} className="h-[17px] bg-white leading-4">
              <td className="border-b border-r border-[#777] bg-[#f0f0f0] p-0 text-center">{n}</td>
              <td className="border-b border-r border-[#bbb] p-0 pl-[3px]">{t}</td>
              <td className="border-b border-r border-[#bbb] p-0 pl-[3px]">{c}</td>
            </tr>
          ))}
        </tbody>
      </table>
    </div>
  </section>
);

const StatusBar = () => (
  <footer className="flex h-5 shrink-0 items-center bg-[#007acc] pl-[3px] pr-2 text-white">
    <span className="flex-1">Ready</span>
    <span className="flex w-24 items-center gap-0.5">
      <svg viewBox="0 0 16 16" className="size-4" aria-hidden="true">
        <path d="M1 6h10v7H7l-3 3v-3H1z" fill="#f0d460" />
        <circle cx="10" cy="6" r="5.500" fill="#1c3fc4" stroke="#fff" strokeWidth=".8" />
        <path d="M10 2.500v1.500M10 5.500v4" stroke="#fff" strokeWidth="1.800" />
      </svg>
      3 Messages
    </span>
    <span className="w-[89px]">No Selection</span>
    <span className="flex w-[187px] items-center gap-1.5">
      <svg viewBox="0 0 8 4" className="h-1 w-2" aria-hidden="true"><path d="M0 4h8L4 0z" fill="#fff" /></svg>
      Metric (mm, kg, N, s, mV, mA)
    </span>
    <span className="w-[54px]">Degrees</span>
    <span className="w-[39px]">rad/s</span>
    <span>Celsius</span>
  </footer>
);

const App: React.FC = () => {
  return (
    <div className="flex h-screen flex-col overflow-hidden bg-[#eeeef2] font-['Open_Sans','Noto_Sans',sans-serif] text-[11px]">
      <Header />
      <Ribbon />
      <div className="flex min-h-0 flex-1 gap-1">
        <aside className="flex w-[339px] shrink-0 flex-col gap-1">
          <OutlinePanel />
          <DetailsPanel />
        </aside>
        <div className="flex min-w-0 flex-1 flex-col">
          <Toolbar />
          <Viewport />
          <div className="flex h-[241px] shrink-0 gap-1 pt-1">
            <MessagesPanel />
            <TabularPanel />
          </div>
        </div>
      </div>
      <StatusBar />
    </div>
  );
};

export default App;
